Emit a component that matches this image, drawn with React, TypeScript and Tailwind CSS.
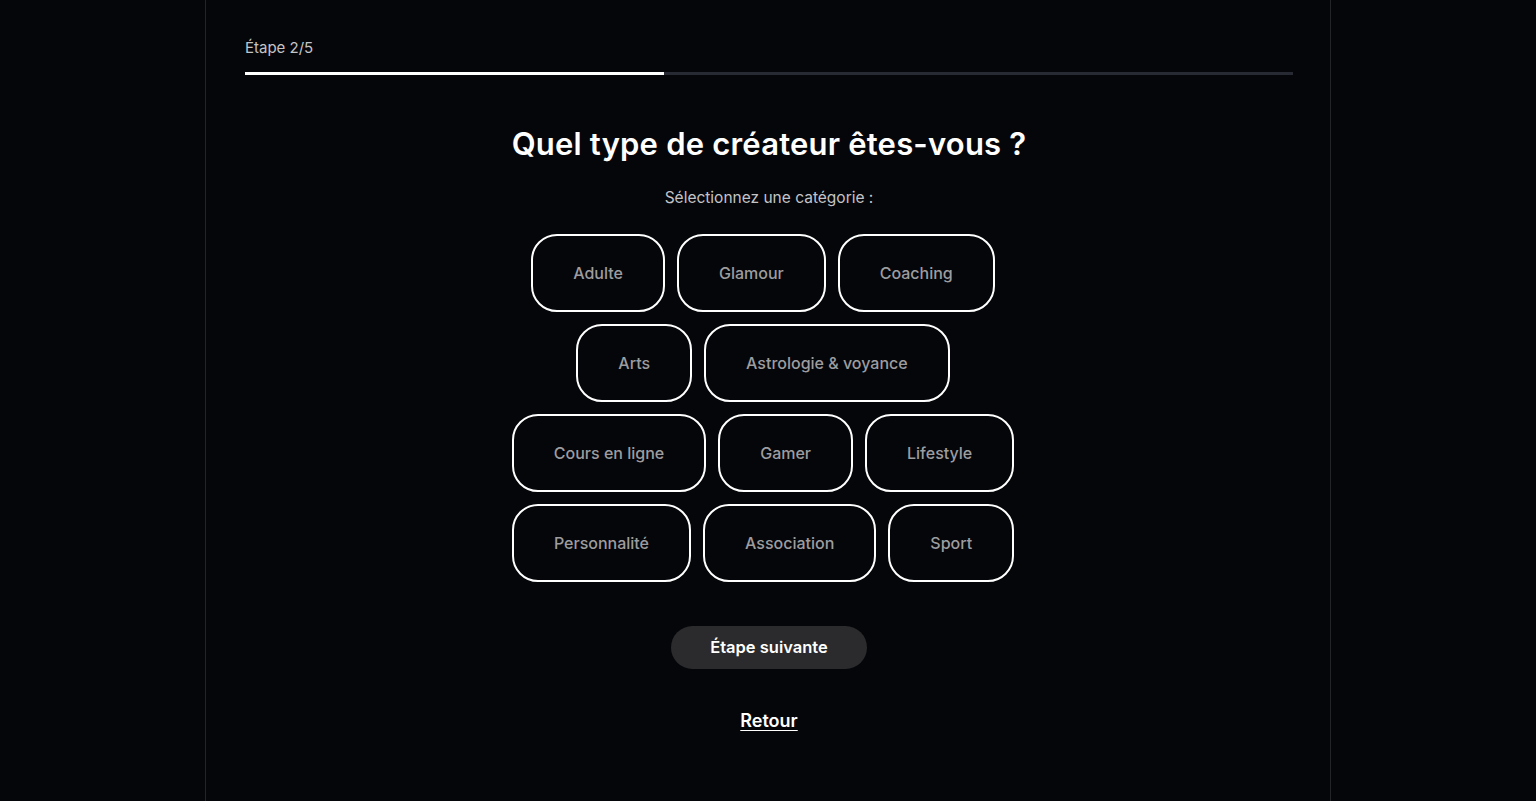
import React, { useState } from 'react';

const categories = [
  'Adulte',
  'Glamour',
  'Coaching',
  'Arts',
  'Astrologie & voyance',
  'Cours en ligne',
  'Gamer',
  'Lifestyle',
  'Personnalité',
  'Association',
  'Sport',
];

const App = () => {
  const [selected, setSelected] = useState<string | null>(null);

  return (
    <div className="min-h-screen bg-[#05060a] font-['Inter',sans-serif]">
      <div className="mx-auto min-h-screen w-[1126px] border-x border-[#232429] pl-[39px] pr-[37px] pt-[38px]">
        <div className="text-[15px] leading-[20px] text-[#c4c4c6]">Étape 2/5</div>
        <div className="mt-[14px] h-[3px] w-full bg-[#272a33]">
          <div className="h-full w-[40%] bg-white" />
        </div>

        <div className="flex flex-col items-center">
          <h1 className="mt-[49px] text-[31px] font-semibold leading-[40px] tracking-[0.2px] text-white">
            Quel type de créateur êtes-vous ?
          </h1>
          <p className="mt-[22px] text-[15.5px] leading-[24px] text-[#c4c4c6]">Sélectionnez une catégorie :</p>

          <div className="mt-[24px] flex w-[520px] flex-wrap justify-center">
            {categories.map((c) => (
              <button
                key={c}
                onClick={() => setSelected(c)}
                className={`mb-[12px] mr-[12px] h-[78px] rounded-[26px] border-2 border-white px-[40px] text-[16px] font-medium ${
                  selected === c ? 'bg-white text-black' : 'text-[#9d9d9f]'
                }`}
              >
                {c}
              </button>
            ))}
          </div>

          <button className="mt-[32px] h-[43px] w-[196px] rounded-full bg-[#2b2b2d] text-[16.5px] font-semibold text-white">
            Étape suivante
          </button>

          <button className="mt-[38px] text-[18px] font-semibold text-white underline underline-offset-[3px]">
            Retour
          </button>
        </div>
      </div>
    </div>
  );
};

export default App;
